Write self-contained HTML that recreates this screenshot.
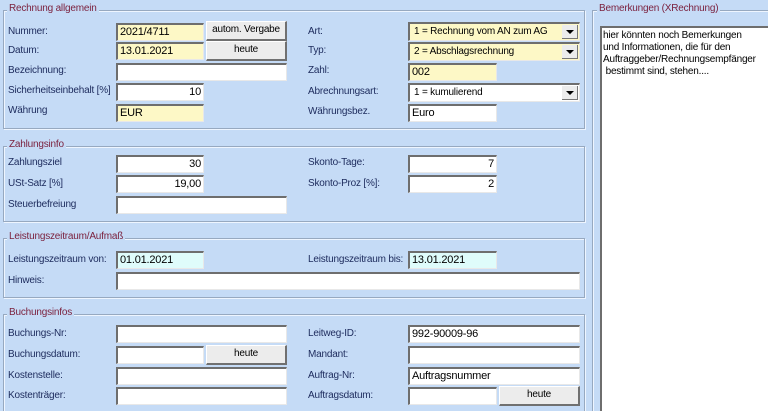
<!DOCTYPE html>
<html style="overflow:hidden;width:768px;height:411px"><head><meta charset="utf-8"><style>
*{box-sizing:border-box;margin:0;padding:0}
body{width:768px;height:411px;overflow:hidden;background:#c5dbf6;font-family:"Liberation Sans",sans-serif;font-size:10px;letter-spacing:-0.2px;color:#1c2a5c;position:relative}
.g{position:absolute;border:1px solid #97a9c0;box-shadow:inset 1px 1px 0 #eef5ff,1px 1px 0 #eef5ff;}
.t{position:absolute;background:#c5dbf6;color:#7a1f3c;padding:0 2px;line-height:12px}
.l{position:absolute;line-height:14px;white-space:nowrap}
.i{position:absolute;background:#fff;border-top:2px solid #6e6e6e;border-left:2px solid #6e6e6e;border-right:1px solid #e8e8e8;border-bottom:1px solid #e8e8e8;color:#000;padding:1px 2px;line-height:13px;height:18px;white-space:nowrap;overflow:hidden;font-size:11px;letter-spacing:-0.2px}
.y{background:#fdf8c6}.c{background:#dffcfb}.r{text-align:right}
.b{position:absolute;background:#ececec;border:1px solid #fff;border-right:2px solid #707070;border-bottom:2px solid #707070;color:#000;text-align:center;line-height:16px;height:20px;white-space:nowrap}
.s{position:absolute;border-top:2px solid #6e6e6e;border-left:2px solid #6e6e6e;border-right:1px solid #e8e8e8;border-bottom:1px solid #e8e8e8;height:19px;color:#000;padding:1px 4px;line-height:14px;white-space:nowrap;overflow:hidden}
.s i{position:absolute;right:1px;top:1px;width:16px;height:14px;background:#ececec;border-right:1px solid #777;border-bottom:1px solid #777}
.s i:after{content:"";position:absolute;left:4px;top:5px;border-left:4px solid transparent;border-right:4px solid transparent;border-top:4px solid #000}
</style></head><body>
<div class="g" style="left:3px;top:10px;width:582px;height:119px"></div><div class="t" style="left:7px;top:3px">Rechnung allgemein</div>
<div class="g" style="left:3px;top:146px;width:582px;height:76px"></div><div class="t" style="left:7px;top:139px">Zahlungsinfo</div>
<div class="g" style="left:3px;top:238px;width:582px;height:60px"></div><div class="t" style="left:7px;top:231px">Leistungszeitraum/Aufmaß</div>
<div class="g" style="left:3px;top:314px;width:582px;height:110px"></div><div class="t" style="left:7px;top:307px">Buchungsinfos</div>
<div class="g" style="left:592px;top:10px;width:190px;height:420px"></div><div class="t" style="left:597px;top:3px">Bemerkungen (XRechnung)</div>
<div class="i" style="left:600px;top:26px;width:180px;height:400px;padding:2px 1px;line-height:12px;white-space:nowrap;font-size:10px;letter-spacing:-0.2px">hier könnten noch Bemerkungen<br>und Informationen, die für den<br>Auftraggeber/Rechnungsempfänger<br>&nbsp;bestimmt sind, stehen....</div>

<div class="l" style="left:8px;top:25px">Nummer:</div><div class="i y" style="left:116px;top:23px;width:88px">2021/4711</div><div class="b" style="left:206px;top:21px;width:81px">autom. Vergabe</div>
<div class="l" style="left:8px;top:44px">Datum:</div><div class="i y" style="left:116px;top:42px;width:88px">13.01.2021</div><div class="b" style="left:206px;top:41px;width:81px">heute</div>
<div class="l" style="left:8px;top:64px">Bezeichnung:</div><div class="i" style="left:116px;top:63px;width:171px"></div>
<div class="l" style="left:8px;top:84px">Sicherheitseinbehalt [%]</div><div class="i r" style="left:116px;top:83px;width:88px">10</div>
<div class="l" style="left:8px;top:104px">Währung</div><div class="i y" style="left:116px;top:104px;width:88px">EUR</div>
<div class="l" style="left:308px;top:25px">Art:</div><div class="s y" style="left:408px;top:22px;width:172px">1 = Rechnung vom AN zum AG<i></i></div>
<div class="l" style="left:308px;top:44px">Typ:</div><div class="s y" style="left:408px;top:42px;width:172px">2 = Abschlagsrechnung<i></i></div>
<div class="l" style="left:308px;top:64px">Zahl:</div><div class="i y" style="left:408px;top:63px;width:89px">002</div>
<div class="l" style="left:308px;top:85px">Abrechnungsart:</div><div class="s" style="left:408px;top:83px;width:172px;background:#fff">1 = kumulierend<i></i></div>
<div class="l" style="left:308px;top:105px">Währungsbez.</div><div class="i" style="left:408px;top:104px;width:89px">Euro</div>

<div class="l" style="left:8px;top:156px">Zahlungsziel</div><div class="i r" style="left:116px;top:155px;width:88px">30</div>
<div class="l" style="left:8px;top:177px">USt-Satz [%]</div><div class="i r" style="left:116px;top:175px;width:88px">19,00</div>
<div class="l" style="left:8px;top:198px">Steuerbefreiung</div><div class="i" style="left:116px;top:196px;width:171px"></div>
<div class="l" style="left:308px;top:156px">Skonto-Tage:</div><div class="i r" style="left:408px;top:155px;width:89px">7</div>
<div class="l" style="left:308px;top:177px">Skonto-Proz [%]:</div><div class="i r" style="left:408px;top:175px;width:89px">2</div>

<div class="l" style="left:8px;top:253px">Leistungszeitraum von:</div><div class="i c" style="left:116px;top:251px;width:88px">01.01.2021</div>
<div class="l" style="left:308px;top:253px">Leistungszeitraum bis:</div><div class="i c" style="left:408px;top:251px;width:89px">13.01.2021</div>
<div class="l" style="left:8px;top:274px">Hinweis:</div><div class="i" style="left:116px;top:272px;width:464px"></div>

<div class="l" style="left:8px;top:327px">Buchungs-Nr:</div><div class="i" style="left:116px;top:325px;width:171px"></div>
<div class="l" style="left:8px;top:348px">Buchungsdatum:</div><div class="i" style="left:116px;top:346px;width:88px"></div><div class="b" style="left:206px;top:345px;width:81px">heute</div>
<div class="l" style="left:8px;top:369px">Kostenstelle:</div><div class="i" style="left:116px;top:367px;width:171px"></div>
<div class="l" style="left:8px;top:389px">Kostenträger:</div><div class="i" style="left:116px;top:387px;width:171px"></div>
<div class="l" style="left:308px;top:327px">Leitweg-ID:</div><div class="i" style="left:408px;top:325px;width:172px">992-90009-96</div>
<div class="l" style="left:308px;top:348px">Mandant:</div><div class="i" style="left:408px;top:346px;width:172px"></div>
<div class="l" style="left:308px;top:369px">Auftrag-Nr:</div><div class="i" style="left:408px;top:367px;width:172px">Auftragsnummer</div>
<div class="l" style="left:308px;top:389px">Auftragsdatum:</div><div class="i" style="left:408px;top:387px;width:89px"></div><div class="b" style="left:499px;top:386px;width:81px">heute</div>
</body></html>
